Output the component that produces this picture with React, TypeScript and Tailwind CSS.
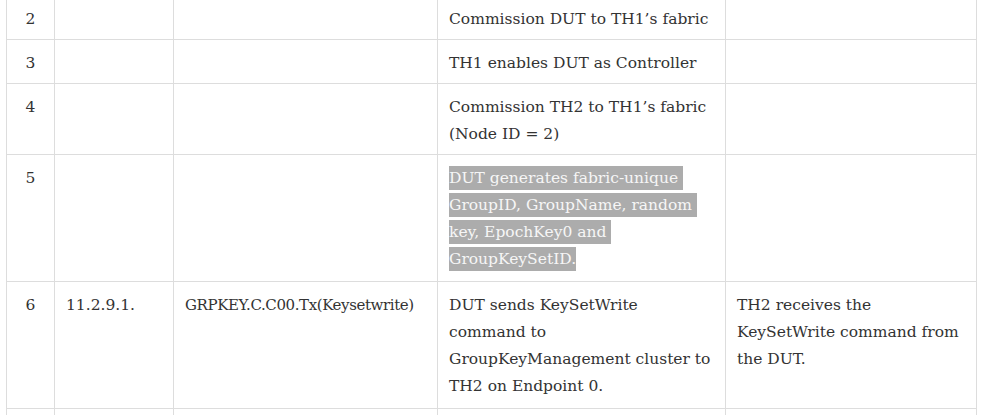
import React from "react";

type Row = { n: string; ref: string; id: string; action: string[]; expect: string[]; h: string; hl?: boolean };

const rows: Row[] = [
  { n: "2", ref: "", id: "", action: ["Commission DUT to TH1’s fabric"], expect: [], h: "h-[44px]" },
  { n: "3", ref: "", id: "", action: ["TH1 enables DUT as Controller"], expect: [], h: "h-[44px]" },
  { n: "4", ref: "", id: "", action: ["Commission TH2 to TH1’s fabric", "(Node ID = 2)"], expect: [], h: "h-[71px]" },
  {
    n: "5",
    ref: "",
    id: "",
    action: ["DUT generates fabric-unique ", "GroupID, GroupName, random ", "key, EpochKey0 and ", "GroupKeySetID."],
    expect: [],
    h: "h-[127px]",
    hl: true,
  },
  {
    n: "6",
    ref: "11.2.9.1.",
    id: "GRPKEY.C.C00.Tx(Keysetwrite)",
    action: ["DUT sends KeySetWrite", "command to", "GroupKeyManagement cluster to", "TH2 on Endpoint 0."],
    expect: ["TH2 receives the", "KeySetWrite command from", "the DUT."],
    h: "h-[127px]",
  },
  { n: "", ref: "", id: "", action: [], expect: [], h: "h-[60px]" },
];

function Lines({ lines, hl }: { lines: string[]; hl?: boolean }) {
  return (
    <>
      {lines.map((l, i) => (
        <div key={i} className="whitespace-pre">
          {hl ? <span className="bg-[#acacac] text-[#f6f6f6] py-[3px]">{l}</span> : l}
        </div>
      ))}
    </>
  );
}

export default function App() {
  return (
    <div className="w-[982px] h-[415px] overflow-hidden bg-white">
      <table
        className="ml-[6px] -mt-[5px] border-collapse table-fixed w-[970px] text-[#333333] text-[15.5px] leading-[27px]"
        style={{ fontFamily: '"DejaVu Serif", serif' }}
      >
        <colgroup>
          <col className="w-[48px]" />
          <col className="w-[119px]" />
          <col className="w-[264px]" />
          <col className="w-[288px]" />
          <col className="w-[251px]" />
        </colgroup>
        <tbody>
          {rows.map((r, i) => (
            <tr key={i} className={r.h}>
              <td className="border border-[#dddddd] align-top pt-[10px] px-[11px] text-center">{r.n}</td>
              <td className="border border-[#dddddd] align-top pt-[10px] px-[11px]">{r.ref}</td>
              <td className="border border-[#dddddd] align-top pt-[10px] pl-[11px] pr-[4px] whitespace-nowrap text-[15px] tracking-[-0.4px]">{r.id}</td>
              <td className="border border-[#dddddd] align-top pt-[10px] px-[11px]">
                <Lines lines={r.action} hl={r.hl} />
              </td>
              <td className="border border-[#dddddd] align-top pt-[10px] px-[11px]">
                <Lines lines={r.expect} />
              </td>
            </tr>
          ))}
        </tbody>
      </table>
    </div>
  );
}
